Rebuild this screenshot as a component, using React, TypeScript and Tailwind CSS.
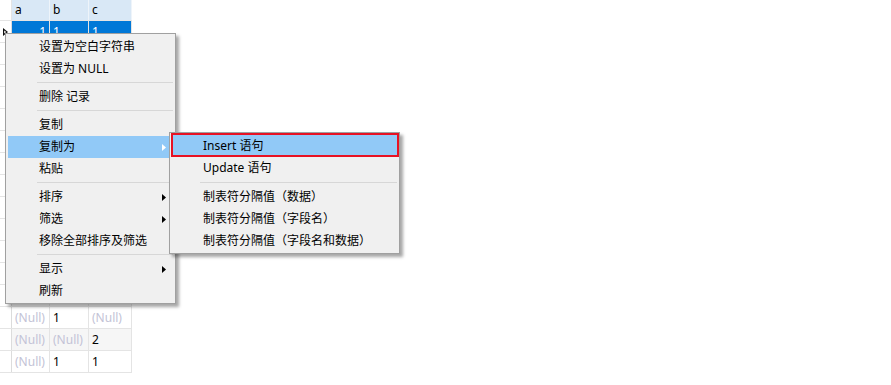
import React from "react";

const FONT = "font-['Noto_Sans','Noto_Sans_CJK_SC',sans-serif]";

type Row = { a: string; b: string; c: string };

// rows 2..13 sit behind the menu, so they carry no text
const rows: Row[] = [
  { a: "1", b: "1", c: "1" },
  ...Array.from({ length: 12 }, () => ({ a: "", b: "", c: "" })),
  { a: "(Null)", b: "1", c: "(Null)" },
  { a: "(Null)", b: "(Null)", c: "2" },
  { a: "(Null)", b: "1", c: "1" },
];

const Cell = ({ value, right, selected }: { value: string; right?: boolean; selected?: boolean }) => {
  const isNull = value === "(Null)";
  return (
    <div
      className={`h-full border-r border-[#e4e4e4] px-[3px] flex items-center overflow-hidden whitespace-nowrap ${
        right ? "justify-end" : ""
      } ${selected ? "bg-[#0078d7] text-white" : isNull ? "text-[#c3c3d6]" : "text-black"}`}
    >
      {value}
    </div>
  );
};

const RowMarker = () => (
  <svg width="8" height="10" viewBox="0 0 8 10" className="ml-[2px]">
    <path d="M1 1 L6 5 L1 9 Z" fill="#111" />
    <path d="M2.2 3.4 L4.2 5 L2.2 6.6 Z" fill="#fff" />
  </svg>
);

const DataGrid = () => (
  <div className="w-[132px] text-[12px] leading-none">
    <div className="grid grid-cols-[12px_38px_39px_43px] h-[21px] border-b border-[#e4e4e4]">
      <div className="bg-white border-r border-[#e4e4e4]" />
      {["a", "b", "c"].map((h) => (
        <div key={h} className="bg-[#d9e8f6] border-r border-[#eef4fa] px-[3px] flex items-center text-black">
          {h}
        </div>
      ))}
    </div>
    {rows.map((r, i) => (
      <div
        key={i}
        className={`grid grid-cols-[12px_38px_39px_43px] h-[22px] border-b border-[#e4e4e4] ${
          i % 2 === 0 && i > 0 ? "bg-[#f6f6f6]" : "bg-white"
        }`}
      >
        <div className="bg-white border-r border-[#dcdcdc] flex items-center">{i === 0 && <RowMarker />}</div>
        <Cell value={r.a} right={i === 0} selected={i === 0} />
        <Cell value={r.b} selected={i === 0} />
        <Cell value={r.c} selected={i === 0} />
      </div>
    ))}
  </div>
);

const Arrow = ({ white }: { white?: boolean }) => (
  <svg width="4" height="7" viewBox="0 0 4 7">
    <path d="M0 0 L4 3.5 L0 7 Z" fill={white ? "#fff" : "#000"} />
  </svg>
);

const MenuItem = ({ label, sub, active }: { label: string; sub?: boolean; active?: boolean }) => (
  <div className={`h-[22px] flex items-center pl-[31px] pr-[7px] ${active ? "bg-[#91c9f7]" : ""}`}>
    <span className="flex-1 whitespace-nowrap">{label}</span>
    {sub && <Arrow white={active} />}
  </div>
);

const Sep = ({ indent, tall }: { indent: string; tall?: boolean }) => (
  <div className={`${tall ? "h-[7px] pt-[3px]" : "h-[6px] pt-[2px]"} ${indent}`}>
    <div className="h-px bg-[#d7d7d7]" />
  </div>
);

export default function App() {
  return (
    <div className={`relative w-[891px] h-[385px] bg-white overflow-hidden ${FONT}`}>
      <DataGrid />

      {/* context menu */}
      <div className="absolute left-[5px] top-[33px] w-[171px] bg-[#f0f0f0] border border-[#a0a0a0] pt-[2px] pb-[1px] px-[2px] text-[12px] leading-none text-black shadow-[3px_3px_3px_rgba(0,0,0,0.35)]">
        <MenuItem label="设置为空白字符串" />
        <MenuItem label="设置为 NULL" />
        <Sep indent="ml-[29px]" />
        <MenuItem label="删除 记录" />
        <Sep indent="ml-[29px]" />
        <MenuItem label="复制" />
        <MenuItem label="复制为" sub active />
        <MenuItem label="粘贴" />
        <Sep indent="ml-[29px]" />
        <MenuItem label="排序" sub />
        <MenuItem label="筛选" sub />
        <MenuItem label="移除全部排序及筛选" />
        <Sep indent="ml-[29px]" />
        <MenuItem label="显示" sub />
        <MenuItem label="刷新" />
      </div>

      {/* submenu of 复制为 */}
      <div className="absolute left-[169px] top-[132px] w-[231px] bg-[#f0f0f0] border border-[#a0a0a0] pt-[2px] pb-[1px] px-[2px] text-[12px] leading-none text-black shadow-[3px_3px_3px_rgba(0,0,0,0.35)]">
        <MenuItem label="Insert 语句" active />
        <MenuItem label="Update 语句" />
        <Sep indent="ml-[28px]" tall />
        <MenuItem label="制表符分隔值（数据）" />
        <MenuItem label="制表符分隔值（字段名）" />
        <MenuItem label="制表符分隔值（字段名和数据）" />
      </div>

      {/* red highlight box */}
      <div className="absolute left-[171px] top-[133px] w-[228px] h-[24px] border-2 border-[#e81123]" />
    </div>
  );
}
